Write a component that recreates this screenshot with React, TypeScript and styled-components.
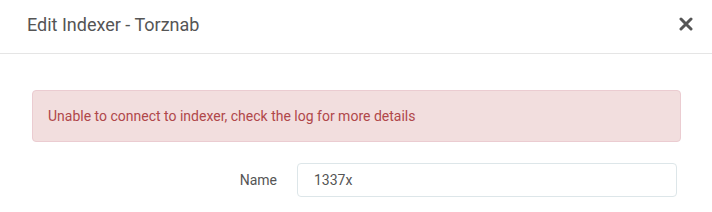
import React from "react";
import styled, { createGlobalStyle } from "styled-components";

const Global = createGlobalStyle`
  html, body { margin: 0; padding: 0; background: #fff; }
  body { font-family: Roboto, "Open Sans", sans-serif; }
  * { box-sizing: border-box; }
`;

const Modal = styled.div`
  width: 712px;
  height: 212px;
  background: #fff;
  overflow: hidden;
`;

const Header = styled.div`
  display: flex;
  align-items: center;
  justify-content: space-between;
  height: 54px;
  padding: 0 19px 0 27px;
  border-bottom: 1px solid #e5e5e5;
`;

const Title = styled.h2`
  margin: 0;
  font-size: 18px;
  font-weight: 400;
  color: #555;
  line-height: 20px;
  margin-top: -3px;
`;

const Close = styled.button`
  display: flex;
  align-items: center;
  justify-content: center;
  width: 14px;
  height: 14px;
  padding: 0;
  border: 0;
  background: none;
  cursor: pointer;
  margin-top: -6px;
`;

const Body = styled.div`
  padding: 36px 31px 0 32px;
`;

const Alert = styled.div`
  padding: 15px;
  border: 1px solid #ebccd1;
  border-radius: 4px;
  background: #f2dede;
  color: #b0474a;
  font-size: 14px;
  line-height: 20px;
`;

const FormGroup = styled.div`
  display: flex;
  align-items: center;
  margin-top: 21px;
`;

const Label = styled.label`
  width: 245px;
  text-align: right;
  font-size: 14px;
  font-weight: 400;
  color: #555;
`;

const Input = styled.input`
  margin-left: 20px;
  width: 380px;
  height: 34px;
  padding: 0 16px;
  border: 1px solid #dde6e9;
  border-radius: 4px;
  font-family: Roboto, sans-serif;
  font-size: 14px;
  color: #555;
  outline: none;
`;

export default function App() {
  return (
    <>
      <Global />
      <Modal>
        <Header>
          <Title>Edit Indexer - Torznab</Title>
          <Close aria-label="Close">
            <svg width="14" height="14" viewBox="0 0 14 14">
              <path d="M2 2L12 12M12 2L2 12" stroke="#555" strokeWidth="3" strokeLinecap="round" />
            </svg>
          </Close>
        </Header>
        <Body>
          <Alert>Unable to connect to indexer, check the log for more details</Alert>
          <FormGroup>
            <Label>Name</Label>
            <Input defaultValue="1337x" />
          </FormGroup>
        </Body>
      </Modal>
    </>
  );
}
